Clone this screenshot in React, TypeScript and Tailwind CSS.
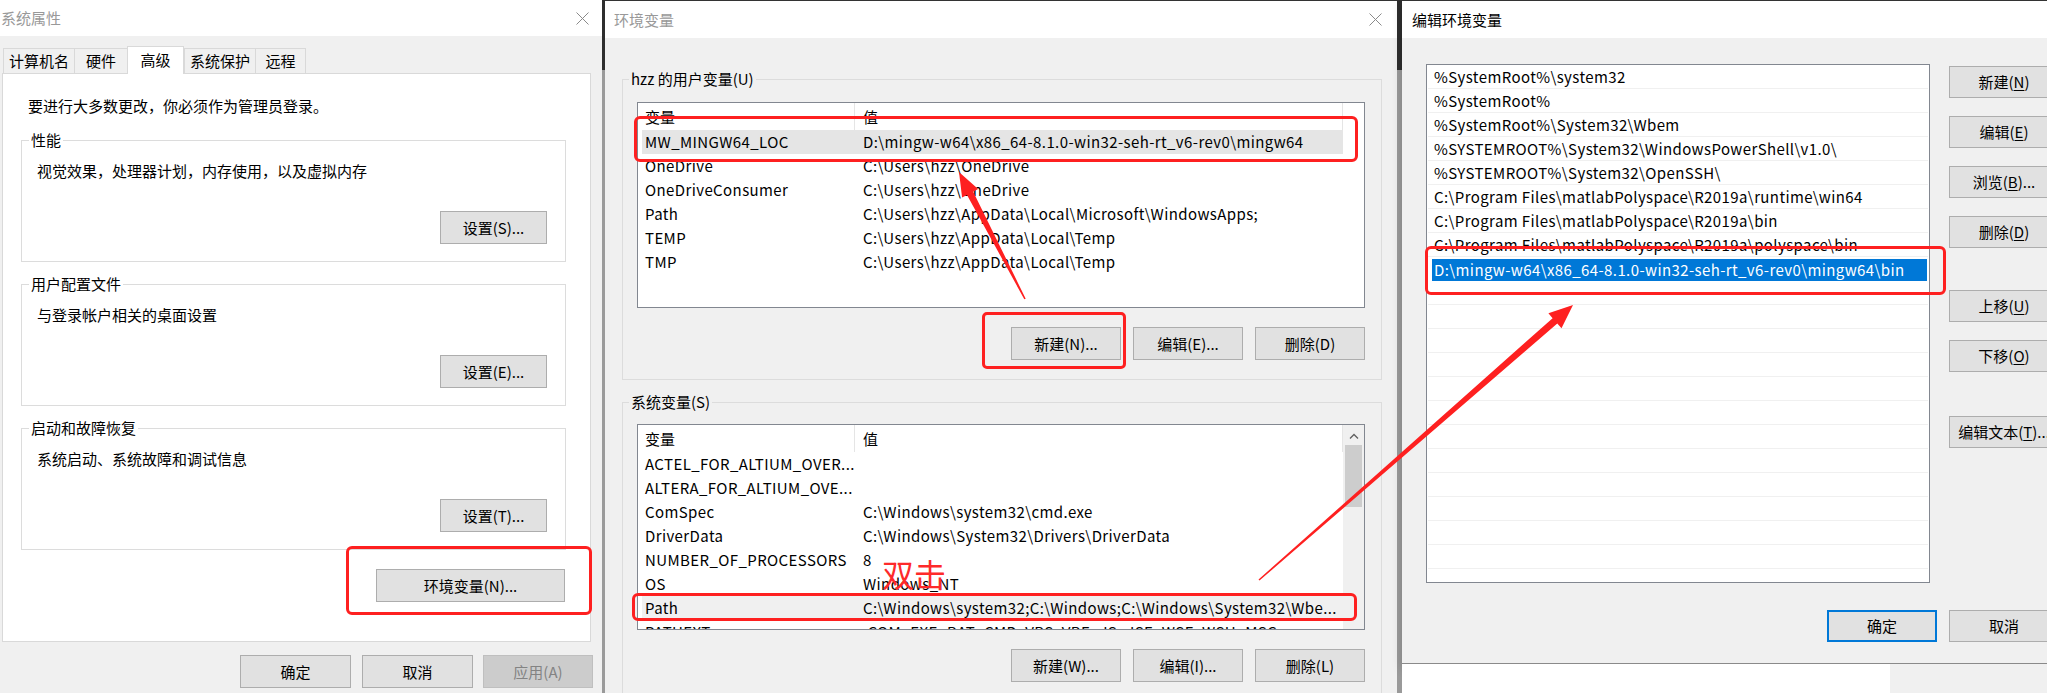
import React from "react";

const USER_VARS: [string, string][] = [
  ["MW_MINGW64_LOC", "D:\\mingw-w64\\x86_64-8.1.0-win32-seh-rt_v6-rev0\\mingw64"],
  ["OneDrive", "C:\\Users\\hzz\\OneDrive"],
  ["OneDriveConsumer", "C:\\Users\\hzz\\OneDrive"],
  ["Path", "C:\\Users\\hzz\\AppData\\Local\\Microsoft\\WindowsApps;"],
  ["TEMP", "C:\\Users\\hzz\\AppData\\Local\\Temp"],
  ["TMP", "C:\\Users\\hzz\\AppData\\Local\\Temp"],
];

const SYS_VARS: [string, string][] = [
  ["ACTEL_FOR_ALTIUM_OVER...", ""],
  ["ALTERA_FOR_ALTIUM_OVE...", ""],
  ["ComSpec", "C:\\Windows\\system32\\cmd.exe"],
  ["DriverData", "C:\\Windows\\System32\\Drivers\\DriverData"],
  ["NUMBER_OF_PROCESSORS", "8"],
  ["OS", "Windows_NT"],
  ["Path", "C:\\Windows\\system32;C:\\Windows;C:\\Windows\\System32\\Wbe..."],
  ["PATHEXT", ".COM;.EXE;.BAT;.CMD;.VBS;.VBE;.JS;.JSE;.WSF;.WSH;.MSC"],
];

const PATHS = [
  "%SystemRoot%\\system32",
  "%SystemRoot%",
  "%SystemRoot%\\System32\\Wbem",
  "%SYSTEMROOT%\\System32\\WindowsPowerShell\\v1.0\\",
  "%SYSTEMROOT%\\System32\\OpenSSH\\",
  "C:\\Program Files\\matlabPolyspace\\R2019a\\runtime\\win64",
  "C:\\Program Files\\matlabPolyspace\\R2019a\\bin",
  "C:\\Program Files\\matlabPolyspace\\R2019a\\polyspace\\bin",
  "D:\\mingw-w64\\x86_64-8.1.0-win32-seh-rt_v6-rev0\\mingw64\\bin",
];

function Btn({
  className = "",
  children,
  disabled = false,
}: {
  className?: string;
  children: React.ReactNode;
  disabled?: boolean;
}) {
  const tone = disabled
    ? "border-[#bfbfbf] bg-[#cccccc] text-[#838383]"
    : "border-[#adadad] bg-[#e1e1e1] text-black";
  return (
    <div className={`flex shrink-0 items-center justify-center border whitespace-nowrap ${tone} ${className}`}>
      {children}
    </div>
  );
}

function CloseX() {
  return (
    <svg width="13" height="13" viewBox="0 0 13 13">
      <path d="M0.5 0.5 L12.5 12.5 M12.5 0.5 L0.5 12.5" stroke="#8a8a8a" strokeWidth="1" />
    </svg>
  );
}

// strip between two windows: dark near the top, grey shadow below
function Gap({ className }: { className: string }) {
  return (
    <div className={`flex shrink-0 flex-col ${className}`}>
      <div className="h-[70px] shrink-0 bg-[#2e2e2e]" />
      <div className="flex-1 bg-[#9a9a9a]" />
    </div>
  );
}

function Group({
  title,
  desc,
  btn,
  className = "",
}: {
  title: string;
  desc: string;
  btn: string;
  className?: string;
}) {
  return (
    <fieldset className={`ml-[18px] w-[545px] shrink-0 border border-[#dcdcdc] p-0 ${className}`}>
      <legend className="ml-[7px] px-[2px]">{title}</legend>
      <div className="pr-[18px] pb-[17px] pl-[15px]">
        <p className="mt-[11px]">{desc}</p>
        <div className="mt-[30px] flex justify-end">
          <Btn className="h-[33px] w-[107px]">{btn}</Btn>
        </div>
      </div>
    </fieldset>
  );
}

function SystemProps() {
  const tabs = ["计算机名", "硬件", "高级", "系统保护", "远程"];
  const widths = ["w-[71px]", "w-[53px]", "w-[57px]", "w-[71px]", "w-[51px]"];
  return (
    <div className="flex w-[602px] shrink-0 flex-col bg-[#f0f0f0]">
      <div className="flex h-[36px] shrink-0 items-center justify-between bg-white pr-[13px] pl-[1px]">
        <span className="text-[#999999]">系统属性</span>
        <CloseX />
      </div>

      {/* tab strip */}
      <div className="mt-[10px] flex h-[27px] shrink-0 items-end pl-[3px]">
        {tabs.map((t, i) =>
          i === 2 ? (
            <div
              key={t}
              className={`relative z-10 -mb-px flex h-[28px] items-center justify-center border border-b-0 border-[#d9d9d9] bg-white pb-[2px] ${widths[i]}`}
            >
              {t}
            </div>
          ) : (
            <div
              key={t}
              className={`flex h-[25px] items-center justify-center border-t border-l border-[#d9d9d9] bg-[#f0f0f0] ${i === 4 ? "border-r" : ""} ${widths[i]}`}
            >
              {t}
            </div>
          )
        )}
      </div>

      {/* tab page */}
      <div className="ml-[2px] flex h-[569px] w-[589px] shrink-0 flex-col border border-[#d9d9d9] bg-white">
        <p className="mt-[22px] ml-[25px]">要进行大多数更改，你必须作为管理员登录。</p>
        <Group className="mt-[14px]" title="性能" desc="视觉效果，处理器计划，内存使用，以及虚拟内存" btn="设置(S)..." />
        <Group className="mt-[12px]" title="用户配置文件" desc="与登录帐户相关的桌面设置" btn="设置(E)..." />
        <Group className="mt-[12px]" title="启动和故障恢复" desc="系统启动、系统故障和调试信息" btn="设置(T)..." />
        <div className="mt-[19px] flex justify-end pr-[25px]">
          <Btn className="h-[33px] w-[189px]">环境变量(N)...</Btn>
        </div>
      </div>

      <div className="mt-[13px] flex shrink-0 justify-end pr-[9px]">
        <Btn className="h-[33px] w-[111px]">确定</Btn>
        <Btn className="ml-[11px] h-[33px] w-[111px]">取消</Btn>
        <Btn disabled className="ml-[10px] h-[33px] w-[110px]">
          应用(A)
        </Btn>
      </div>
    </div>
  );
}

function VarList({
  rows,
  selected,
  scrollbar = false,
}: {
  rows: [string, string][];
  selected: number;
  scrollbar?: boolean;
}) {
  return (
    <div className="ml-[14px] flex h-[206px] w-[728px] overflow-hidden border border-[#828790] bg-white">
      <div className="w-[705px] shrink-0">
        <div className="flex h-[27px] items-center border-r border-[#e5e5e5]">
          <div className="flex h-full w-[217px] items-center border-r border-[#e5e5e5] pl-[7px]">变量</div>
          <div className="pl-[8px]">值</div>
        </div>
        {rows.map(([k, v], i) => (
          <div
            key={k + i}
            className={`ml-[4px] flex h-[24px] items-center tracking-[0.4px] whitespace-nowrap ${i === selected ? (scrollbar ? "bg-[#f0f0f0]" : "bg-[#e5e5e5]") : ""}`}
          >
            <div className="w-[214px] shrink-0 overflow-hidden pl-[3px]">{k}</div>
            <div className="pl-[7px]">{v}</div>
          </div>
        ))}
      </div>
      {scrollbar && (
        <div className="flex w-[21px] shrink-0 flex-col items-center bg-[#f0f0f0]">
          <svg className="mt-[8px]" width="10" height="6" viewBox="0 0 10 6">
            <path d="M1 5.5 L5 1.5 L9 5.5" fill="none" stroke="#606060" strokeWidth="1.3" />
          </svg>
          <div className="mt-[6px] h-[62px] w-[17px] bg-[#cdcdcd]" />
        </div>
      )}
    </div>
  );
}

function EnvVars() {
  return (
    <div className="flex w-[792px] shrink-0 flex-col border-t border-[#333333] bg-[#f0f0f0]">
      <div className="flex h-[37px] shrink-0 items-center justify-between bg-white pr-[15px] pl-[9px]">
        <span className="text-[#999999]">环境变量</span>
        <CloseX />
      </div>

      <fieldset className="mt-[31px] ml-[17px] w-[760px] shrink-0 border border-[#dcdcdc] p-0">
        <legend className="ml-[6px] px-[2px]">hzz 的用户变量(U)</legend>
        <div className="mt-[13px]">
          <VarList rows={USER_VARS} selected={0} />
        </div>
        <div className="mt-[19px] flex justify-end gap-[12px] pr-[16px] pb-[19px]">
          <Btn className="h-[33px] w-[110px]">新建(N)...</Btn>
          <Btn className="h-[33px] w-[110px]">编辑(E)...</Btn>
          <Btn className="h-[33px] w-[110px]">删除(D)</Btn>
        </div>
      </fieldset>

      <fieldset className="mt-[12px] ml-[17px] w-[760px] shrink-0 border border-[#dcdcdc] p-0">
        <legend className="ml-[6px] px-[2px]">系统变量(S)</legend>
        <div className="mt-[12px]">
          <VarList rows={SYS_VARS} selected={6} scrollbar />
        </div>
        <div className="mt-[19px] flex justify-end gap-[12px] pr-[16px] pb-[30px]">
          <Btn className="h-[33px] w-[110px]">新建(W)...</Btn>
          <Btn className="h-[33px] w-[110px]">编辑(I)...</Btn>
          <Btn className="h-[33px] w-[110px]">删除(L)</Btn>
        </div>
      </fieldset>
    </div>
  );
}

function Mn({ pre, k, post }: { pre: string; k: string; post: string }) {
  return (
    <span>
      {pre}(<span className="underline underline-offset-2">{k}</span>){post}
    </span>
  );
}

function EditEnv() {
  const empty = Array.from({ length: 13 }, (_, i) => i);
  return (
    <div className="flex w-[700px] shrink-0 flex-col">
      <div className="flex shrink-0 flex-col border-t border-b border-[#333333] border-b-[#8a8a8a] bg-[#f0f0f0] shadow-[0_4px_10px_rgba(0,0,0,0.18)]">
        <div className="flex h-[37px] shrink-0 items-center bg-white pl-[10px]">编辑环境变量</div>

        <div className="flex">
          <div className="mt-[26px] ml-[24px] h-[519px] w-[504px] shrink-0 overflow-hidden border border-[#828790] bg-white tracking-[0.4px]">
            {PATHS.map((p, i) =>
              i === 8 ? (
                <div key={p} className="flex h-[24px] items-end px-[5px] pr-[2px]">
                  <div className="flex h-[22px] w-full items-center bg-[#0078d7] pl-[2px] whitespace-nowrap text-white">{p}</div>
                </div>
              ) : (
                <div key={p} className="mx-[1px] flex h-[24px] items-center border-b border-[#f0f0f0] pl-[6px] whitespace-nowrap">
                  {p}
                </div>
              )
            )}
            {empty.map((i) => (
              <div key={i} className="mx-[1px] h-[24px] border-b border-[#f0f0f0]" />
            ))}
          </div>

          <div className="mt-[28px] ml-[19px] flex flex-col">
            <Btn className="h-[32px] w-[110px]">
              <Mn pre="新建" k="N" post="" />
            </Btn>
            <Btn className="mt-[18px] h-[32px] w-[110px]">
              <Mn pre="编辑" k="E" post="" />
            </Btn>
            <Btn className="mt-[18px] h-[32px] w-[110px]">
              <Mn pre="浏览" k="B" post="..." />
            </Btn>
            <Btn className="mt-[18px] h-[32px] w-[110px]">
              <Mn pre="删除" k="D" post="" />
            </Btn>
            <Btn className="mt-[42px] h-[32px] w-[110px]">
              <Mn pre="上移" k="U" post="" />
            </Btn>
            <Btn className="mt-[18px] h-[32px] w-[110px]">
              <Mn pre="下移" k="O" post="" />
            </Btn>
            <Btn className="mt-[44px] h-[32px] w-[110px]">
              <Mn pre="编辑文本" k="T" post="..." />
            </Btn>
          </div>
        </div>

        <div className="mt-[27px] flex pb-[21px] pl-[425px]">
          <div className="flex h-[32px] w-[110px] items-center justify-center border-2 border-[#0078d7] bg-[#e1e1e1]">确定</div>
          <Btn className="ml-[12px] h-[32px] w-[110px]">取消</Btn>
        </div>
      </div>
      <div className="flex flex-1">
        <div className="w-[488px] bg-white" />
        <div className="flex-1 bg-[#f0f0f0]" />
      </div>
    </div>
  );
}

function arrow(x1: number, y1: number, x2: number, y2: number, tw: number, nw: number, hw: number, hl: number) {
  const dx = x2 - x1;
  const dy = y2 - y1;
  const len = Math.hypot(dx, dy);
  const ux = dx / len;
  const uy = dy / len;
  const nx = -uy;
  const ny = ux;
  const bx = x2 - ux * hl;
  const by = y2 - uy * hl;
  const p = (x: number, y: number) => `${x.toFixed(1)},${y.toFixed(1)}`;
  return [
    p(x1 + (nx * tw) / 2, y1 + (ny * tw) / 2),
    p(bx + (nx * nw) / 2, by + (ny * nw) / 2),
    p(bx + (nx * hw) / 2, by + (ny * hw) / 2),
    p(x2, y2),
    p(bx - (nx * hw) / 2, by - (ny * hw) / 2),
    p(bx - (nx * nw) / 2, by - (ny * nw) / 2),
    p(x1 - (nx * tw) / 2, y1 - (ny * tw) / 2),
  ].join(" ");
}

export default function App() {
  return (
    <div className="relative flex h-[693px] w-[2047px] overflow-hidden bg-white font-['Noto_Sans_CJK_SC',sans-serif] text-[15px] leading-[20px] text-black">
      <SystemProps />
      <Gap className="w-[3px]" />
      <EnvVars />
      <Gap className="w-[5px]" />
      <EditEnv />

      {/* annotations drawn over the screenshot */}
      <div className="absolute top-[546px] left-[346px] h-[69px] w-[246px] rounded-[6px] border-[3px] border-[#fe2020]" />
      <div className="absolute top-[116px] left-[634px] h-[46px] w-[724px] rounded-[6px] border-[3px] border-[#fe2020]" />
      <div className="absolute top-[312px] left-[982px] h-[57px] w-[144px] rounded-[5px] border-[3px] border-[#fe2020]" />
      <div className="absolute top-[593px] left-[632px] h-[28px] w-[725px] rounded-[6px] border-[3px] border-[#fe2020]" />
      <div className="absolute top-[246px] left-[1425px] h-[49px] w-[521px] rounded-[6px] border-[3px] border-[#fe2020]" />
      <div className="absolute top-[555px] left-[882px] text-[32px] leading-[36px] text-[#fe2a2a]">双击</div>
      <svg className="pointer-events-none absolute top-0 left-0" width="2047" height="693">
        <polygon points={arrow(1025, 299, 959, 172, 1.5, 7, 18, 24)} fill="#fe2020" />
        <polygon points={arrow(1259, 580, 1573, 305, 1.5, 7, 20, 24)} fill="#fe2020" />
      </svg>
    </div>
  );
}
